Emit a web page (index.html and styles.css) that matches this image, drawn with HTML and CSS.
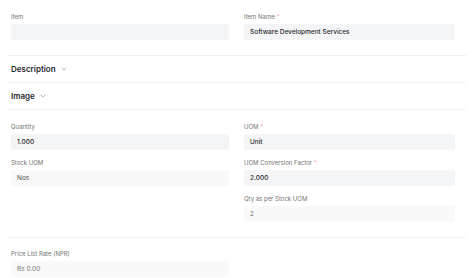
FILE: index.html
```html
<!DOCTYPE html>
<html lang="en">
<head>
    <meta charset="UTF-8" />
    <meta name="viewport" content="width=device-width, initial-scale=1.0" />
    <title>Item Details</title>
    <link rel="stylesheet" href="styles.css">
</head>
<body>
    <div class="form">
        <div class="section">
            <div class="columns">
                <div class="column">
                    <div class="field">
                        <label>Item</label>
                        <div class="control"></div>
                    </div>
                </div>
                <div class="column">
                    <div class="field">
                        <label>Item Name <span class="reqd">*</span></label>
                        <div class="control">Software Development Services</div>
                    </div>
                </div>
            </div>
        </div>

        <div class="section collapsed">
            <div class="section-head">Description
                <svg class="chevron" viewBox="0 0 8 5" width="6" height="4"><path d="M1 1l3 3 3-3" fill="none" stroke="#8d99a6" stroke-width="1" stroke-linecap="round" stroke-linejoin="round"/></svg>
            </div>
        </div>

        <div class="section collapsed">
            <div class="section-head">Image
                <svg class="chevron" viewBox="0 0 8 5" width="6" height="4"><path d="M1 1l3 3 3-3" fill="none" stroke="#8d99a6" stroke-width="1" stroke-linecap="round" stroke-linejoin="round"/></svg>
            </div>
        </div>

        <div class="section">
            <div class="columns">
                <div class="column">
                    <div class="field">
                        <label>Quantity</label>
                        <div class="control">1.000</div>
                    </div>
                    <div class="field">
                        <label>Stock UOM</label>
                        <div class="control readonly dark">Nos</div>
                    </div>
                </div>
                <div class="column">
                    <div class="field">
                        <label>UOM <span class="reqd">*</span></label>
                        <div class="control">Unit</div>
                    </div>
                    <div class="field">
                        <label>UOM Conversion Factor <span class="reqd">*</span></label>
                        <div class="control">2.000</div>
                    </div>
                    <div class="field">
                        <label>Qty as per Stock UOM</label>
                        <div class="control readonly">2</div>
                    </div>
                </div>
            </div>
        </div>

        <div class="section last">
            <div class="columns">
                <div class="column">
                    <div class="field">
                        <label>Price List Rate (NPR)</label>
                        <div class="control readonly">Rs 0.00</div>
                    </div>
                </div>
                <div class="column"></div>
            </div>
        </div>
    </div>
</body>
</html>
```

FILE: styles.css
```css
body {
    margin: 0;
    background-color: #ffffff;
    font-family: Inter, "Noto Sans", sans-serif;
    color: #1f272e;
}

.form {
    padding: 0 8px;
}

.section {
    padding: 12px 3px 15px;
    border-bottom: 1px solid #f0f0f0;
}

.section.collapsed {
    padding: 7px 3px;
}

.section.last {
    padding: 11px 3px 2px;
    border-bottom: none;
}

.section-head {
    display: flex;
    align-items: center;
    gap: 5px;
    font-size: 8px;
    line-height: 12px;
    font-weight: 600;
    color: #1f272e;
}

.columns {
    display: grid;
    grid-template-columns: 218px 211px;
    column-gap: 15px;
}

.column {
    display: flex;
    flex-direction: column;
    gap: 8px;
}

.field label {
    display: block;
    font-size: 6px;
    line-height: 9px;
    color: #737373;
    margin-bottom: 3px;
}

.reqd {
    color: #f0a0a0;
}

.control {
    height: 16px;
    line-height: 16px;
    padding: 0 6px;
    border-radius: 3px;
    background-color: #f4f5f6;
    font-size: 6.5px;
    font-weight: 500;
    color: #1f272e;
}

.control.readonly {
    background-color: #f9f9f9;
    font-weight: 400;
    color: #6f6f6f;
}

.control.readonly.dark {
    color: #4a4a4a;
}
```
